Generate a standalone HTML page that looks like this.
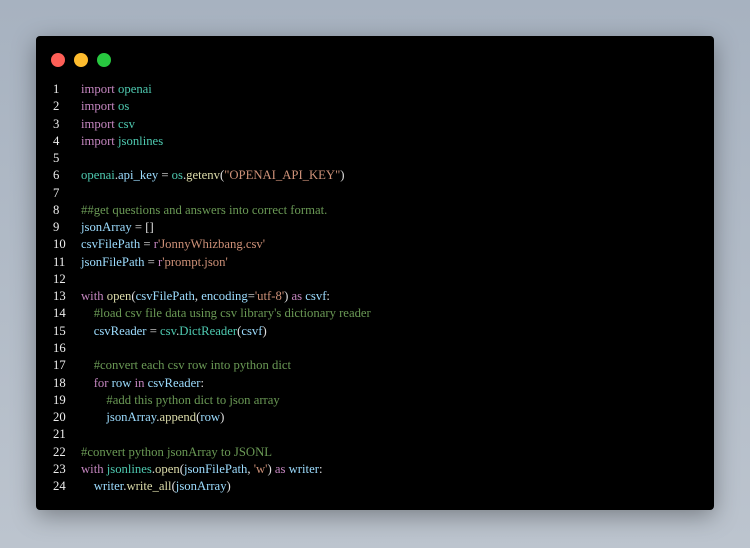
<!DOCTYPE html>
<html><head><style>
body{margin:0;width:750px;height:548px;background:linear-gradient(180deg,#a7b2c0,#bcc4ce);overflow:hidden}
.win{position:absolute;left:36px;top:36px;width:678px;height:474px;background:#000;border-radius:4px;box-shadow:0 6px 24px rgba(0,0,0,.35)}
.dot{position:absolute;top:17px;width:14px;height:14px;border-radius:50%}
pre{position:absolute;left:17px;top:45px;margin:0;font-family:"Liberation Serif",serif;font-size:12.7px;line-height:17.26px;color:#e0e0e0}
.n{display:inline-block;width:28px;text-align:left;color:#eeeeee}
.k{color:#c586c0}.m{color:#4ec9b0}.v{color:#9cdcfe}.s{color:#ce9178}.c{color:#6a9955}.f{color:#dcdcaa}
</style></head><body>
<div class="win">
<div class="dot" style="left:15px;background:#fe5f57"></div>
<div class="dot" style="left:38px;background:#febc2e"></div>
<div class="dot" style="left:61px;background:#28c840"></div>
<pre><span class="n">1</span><span class="k">import</span> <span class="m">openai</span>
<span class="n">2</span><span class="k">import</span> <span class="m">os</span>
<span class="n">3</span><span class="k">import</span> <span class="m">csv</span>
<span class="n">4</span><span class="k">import</span> <span class="m">jsonlines</span>
<span class="n">5</span>
<span class="n">6</span><span class="m">openai</span>.<span class="v">api_key</span> = <span class="m">os</span>.<span class="f">getenv</span>(<span class="s">"OPENAI_API_KEY"</span>)
<span class="n">7</span>
<span class="n">8</span><span class="c">##get questions and answers into correct format.</span>
<span class="n">9</span><span class="v">jsonArray</span> = []
<span class="n">10</span><span class="v">csvFilePath</span> = <span class="k">r</span><span class="s">'JonnyWhizbang.csv'</span>
<span class="n">11</span><span class="v">jsonFilePath</span> = <span class="k">r</span><span class="s">'prompt.json'</span>
<span class="n">12</span>
<span class="n">13</span><span class="k">with</span> <span class="f">open</span>(<span class="v">csvFilePath</span>, <span class="v">encoding</span>=<span class="s">'utf-8'</span>) <span class="k">as</span> <span class="v">csvf</span>:
<span class="n">14</span>    <span class="c">#load csv file data using csv library's dictionary reader</span>
<span class="n">15</span>    <span class="v">csvReader</span> = <span class="m">csv</span>.<span class="m">DictReader</span>(<span class="v">csvf</span>)
<span class="n">16</span>
<span class="n">17</span>    <span class="c">#convert each csv row into python dict</span>
<span class="n">18</span>    <span class="k">for</span> <span class="v">row</span> <span class="k">in</span> <span class="v">csvReader</span>:
<span class="n">19</span>        <span class="c">#add this python dict to json array</span>
<span class="n">20</span>        <span class="v">jsonArray</span>.<span class="f">append</span>(<span class="v">row</span>)
<span class="n">21</span>
<span class="n">22</span><span class="c">#convert python jsonArray to JSONL</span>
<span class="n">23</span><span class="k">with</span> <span class="m">jsonlines</span>.<span class="f">open</span>(<span class="v">jsonFilePath</span>, <span class="s">'w'</span>) <span class="k">as</span> <span class="v">writer</span>:
<span class="n">24</span>    <span class="v">writer</span>.<span class="f">write_all</span>(<span class="v">jsonArray</span>)
</pre>
</div>
</body></html>
